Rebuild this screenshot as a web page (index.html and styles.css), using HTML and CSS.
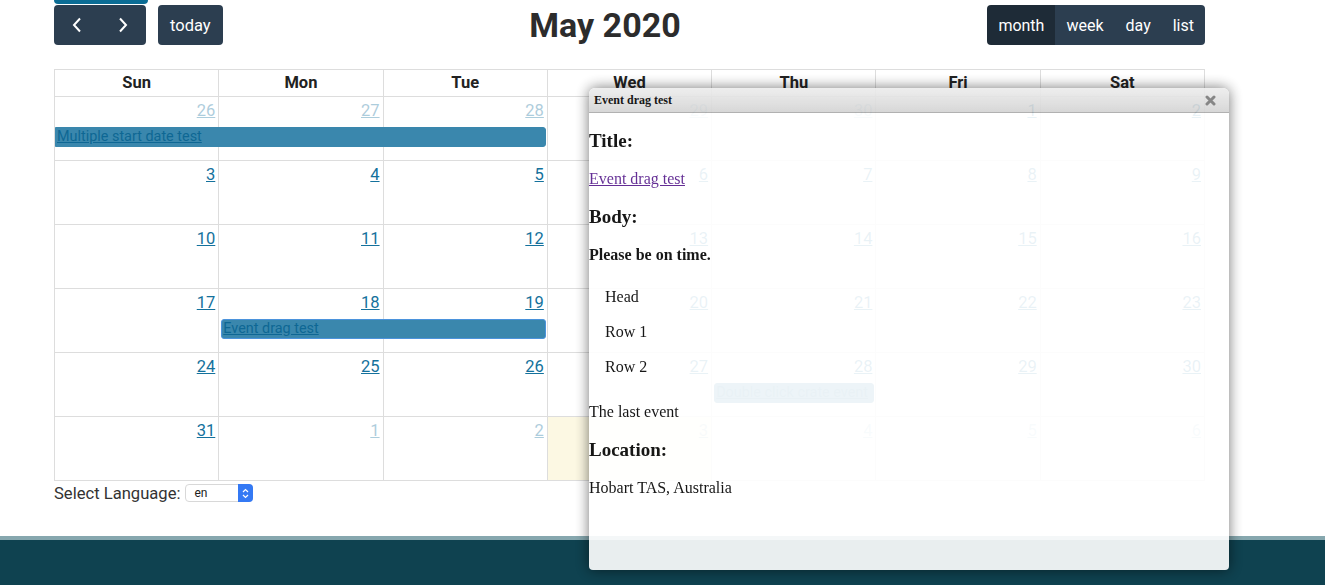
FILE: index.html
```html
<!DOCTYPE html>
<html lang="en">
<head>
    <meta charset="UTF-8">
    <meta name="viewport" content="width=device-width, initial-scale=1.0">
    <title>Calendar</title>
    <link rel="stylesheet" href="styles.css">
</head>
<body>
    <div class="page">
        <div class="nav-tab"></div>

        <div class="toolbar">
            <div class="toolbar-chunk">
                <div class="btn-group">
                    <button class="btn btn-icon" aria-label="prev">
                        <svg width="10" height="16" viewBox="0 0 10 16"><path d="M8 1.5 L2 8 L8 14.5" fill="none" stroke="#fff" stroke-width="2"/></svg>
                    </button>
                    <button class="btn btn-icon" aria-label="next">
                        <svg width="10" height="16" viewBox="0 0 10 16"><path d="M2 1.5 L8 8 L2 14.5" fill="none" stroke="#fff" stroke-width="2"/></svg>
                    </button>
                </div>
                <button class="btn btn-today">today</button>
            </div>
            <h2 class="title">May 2020</h2>
            <div class="btn-group">
                <button class="btn active">month</button>
                <button class="btn">week</button>
                <button class="btn">day</button>
                <button class="btn">list</button>
            </div>
        </div>

        <div class="calendar">
            <div class="head-row">
                <div class="head-cell">Sun</div>
                <div class="head-cell">Mon</div>
                <div class="head-cell">Tue</div>
                <div class="head-cell">Wed</div>
                <div class="head-cell">Thu</div>
                <div class="head-cell">Fri</div>
                <div class="head-cell">Sat</div>
            </div>

            <div class="week">
                <div class="day other"><a class="num" href="#">26</a></div>
                <div class="day other"><a class="num" href="#">27</a></div>
                <div class="day other"><a class="num" href="#">28</a></div>
                <div class="day other"><a class="num" href="#">29</a></div>
                <div class="day other"><a class="num" href="#">30</a></div>
                <div class="day"><a class="num" href="#">1</a></div>
                <div class="day"><a class="num" href="#">2</a></div>
                <a class="event cont-start col-1 span-3" href="#">Multiple start date test</a>
            </div>

            <div class="week">
                <div class="day"><a class="num" href="#">3</a></div>
                <div class="day"><a class="num" href="#">4</a></div>
                <div class="day"><a class="num" href="#">5</a></div>
                <div class="day"><a class="num" href="#">6</a></div>
                <div class="day"><a class="num" href="#">7</a></div>
                <div class="day"><a class="num" href="#">8</a></div>
                <div class="day"><a class="num" href="#">9</a></div>
            </div>

            <div class="week">
                <div class="day"><a class="num" href="#">10</a></div>
                <div class="day"><a class="num" href="#">11</a></div>
                <div class="day"><a class="num" href="#">12</a></div>
                <div class="day"><a class="num" href="#">13</a></div>
                <div class="day"><a class="num" href="#">14</a></div>
                <div class="day"><a class="num" href="#">15</a></div>
                <div class="day"><a class="num" href="#">16</a></div>
            </div>

            <div class="week">
                <div class="day"><a class="num" href="#">17</a></div>
                <div class="day"><a class="num" href="#">18</a></div>
                <div class="day"><a class="num" href="#">19</a></div>
                <div class="day"><a class="num" href="#">20</a></div>
                <div class="day"><a class="num" href="#">21</a></div>
                <div class="day"><a class="num" href="#">22</a></div>
                <div class="day"><a class="num" href="#">23</a></div>
                <a class="event selected col-2 span-2" href="#">Event drag test</a>
            </div>

            <div class="week">
                <div class="day"><a class="num" href="#">24</a></div>
                <div class="day"><a class="num" href="#">25</a></div>
                <div class="day"><a class="num" href="#">26</a></div>
                <div class="day"><a class="num" href="#">27</a></div>
                <div class="day"><a class="num" href="#">28</a></div>
                <div class="day"><a class="num" href="#">29</a></div>
                <div class="day"><a class="num" href="#">30</a></div>
                <a class="event col-5 span-1" href="#">Double click crate event</a>
            </div>

            <div class="week">
                <div class="day"><a class="num" href="#">31</a></div>
                <div class="day other"><a class="num" href="#">1</a></div>
                <div class="day other"><a class="num" href="#">2</a></div>
                <div class="day other today"><a class="num" href="#">3</a></div>
                <div class="day other"><a class="num" href="#">4</a></div>
                <div class="day other"><a class="num" href="#">5</a></div>
                <div class="day other"><a class="num" href="#">6</a></div>
            </div>
        </div>

        <div class="lang">
            <label for="lang" class="lang-label">Select Language:</label>
            <div class="lang-select">
                <select id="lang" name="lang">
                    <option value="en">en</option>
                </select>
                <span class="stepper">
                    <svg width="7" height="11" viewBox="0 0 7 11"><path d="M1 4 L3.5 1.5 L6 4 M1 7 L3.5 9.5 L6 7" fill="none" stroke="#fff" stroke-width="1.2"/></svg>
                </span>
            </div>
        </div>
    </div>

    <div class="footer"></div>

    <div class="dialog">
        <div class="dialog-bar">
            <span>Event drag test</span>
            <svg class="dialog-close" width="11" height="11" viewBox="0 0 11 11"><path d="M2 2 L9 9 M9 2 L2 9" stroke="#7b7b7b" stroke-width="3" stroke-linecap="round"/></svg>
        </div>
        <div class="dialog-body">
            <h3>Title:</h3>
            <p><a href="#" class="visited">Event drag test</a></p>
            <h3>Body:</h3>
            <h4>Please be on time.</h4>
            <table>
                <tr><td>Head</td></tr>
                <tr><td>Row 1</td></tr>
                <tr><td>Row 2</td></tr>
            </table>
            <p>The last event</p>
            <h3>Location:</h3>
            <p>Hobart TAS, Australia</p>
        </div>
    </div>
</body>
</html>
```

FILE: styles.css
```css
body {
    margin: 0;
    background-color: #fff;
    color: #333;
    font-family: Roboto, "Liberation Sans", sans-serif;
    font-size: 16px;
}

.page {
    padding: 0 120px 0 54px;
}

.nav-tab {
    width: 94px;
    height: 4px;
    background-color: #0b6c94;
    border-radius: 0 0 4px 4px;
}

/* toolbar */

.toolbar {
    display: flex;
    justify-content: space-between;
    align-items: center;
    height: 40px;
    margin: 1px 0 24px;
}

.toolbar-chunk {
    display: flex;
    align-items: center;
    gap: 12px;
}

.btn-group {
    display: flex;
}

.btn {
    height: 40px;
    padding: 0 11px;
    border: none;
    border-radius: 4px;
    background-color: #2c3e50;
    color: #fff;
    font-family: inherit;
    font-size: 16px;
    cursor: pointer;
}

.btn-today {
    padding: 0 12px;
    font-size: 16.5px;
}

.btn-group .btn {
    border-radius: 0;
}

.btn-group .btn:first-child {
    border-radius: 4px 0 0 4px;
}

.btn-group .btn:last-child {
    border-radius: 0 4px 4px 0;
}

.btn-icon {
    width: 46px;
    display: flex;
    align-items: center;
    justify-content: center;
}

.btn.active {
    background-color: #1e2b37;
}

.title {
    margin: 0;
    font-size: 34px;
    font-weight: bold;
    color: #2c2c2c;
}

/* month grid */

.calendar {
    border-top: 1px solid #ddd;
    border-left: 1px solid #ddd;
}

.head-row {
    display: grid;
    grid-template-columns: repeat(7, 1fr);
}

.head-cell {
    height: 26px;
    line-height: 26px;
    text-align: center;
    font-weight: bold;
    font-size: 16.5px;
    color: #222;
    border-right: 1px solid #ddd;
    border-bottom: 1px solid #ddd;
}

.week {
    display: grid;
    grid-template-columns: repeat(7, 1fr);
    grid-template-rows: 30px 20px 1fr;
    height: 64px;
}

.day {
    grid-row: 1 / 4;
    padding: 4px 3px 0 0;
    text-align: right;
    border-right: 1px solid #ddd;
    border-bottom: 1px solid #ddd;
}

.day:nth-child(1) { grid-column: 1; }
.day:nth-child(2) { grid-column: 2; }
.day:nth-child(3) { grid-column: 3; }
.day:nth-child(4) { grid-column: 4; }
.day:nth-child(5) { grid-column: 5; }
.day:nth-child(6) { grid-column: 6; }
.day:nth-child(7) { grid-column: 7; }

.num {
    font-size: 16.5px;
    line-height: 20px;
    color: #14719c;
    text-decoration: underline;
}

.day.other .num {
    opacity: 0.35;
}

.day.today {
    background-color: #fcf8e3;
}

.event {
    grid-row: 2;
    margin: 0 2px;
    padding: 0 1px;
    background-color: #3a87ad;
    border: 1px solid #3a87ad;
    border-radius: 3px;
    color: #0e6794;
    font-size: 14.4px;
    line-height: 18px;
    white-space: nowrap;
    overflow: hidden;
}

.event.cont-start {
    margin-left: 0;
    border-top-left-radius: 0;
    border-bottom-left-radius: 0;
}

.event.selected {
    border-color: #4b93dc;
}

.col-1 { grid-column-start: 1; }
.col-2 { grid-column-start: 2; }
.col-5 { grid-column-start: 5; }
.span-1 { grid-column-end: span 1; }
.span-2 { grid-column-end: span 2; }
.span-3 { grid-column-end: span 3; }

/* language picker */

.lang {
    display: flex;
    align-items: center;
    gap: 5px;
    height: 24px;
}

.lang-label {
    color: #333;
    font-size: 16.6px;
}

.lang-select {
    display: flex;
    box-sizing: border-box;
    width: 68px;
    height: 18px;
    border: 1px solid #d8d8d8;
    border-radius: 4px;
    background-color: #fff;
}

.lang-select select {
    flex: 1;
    min-width: 0;
    padding: 0 0 0 8px;
    border: none;
    background: transparent;
    appearance: none;
    outline: none;
    color: #222;
    font-family: Roboto, sans-serif;
    font-size: 12px;
}

.stepper {
    width: 15px;
    margin: -1px -1px -1px 0;
    display: flex;
    align-items: center;
    justify-content: center;
    background-color: #3479f4;
    border-radius: 0 4px 4px 0;
}

.footer {
    height: 46px;
    margin-top: 31px;
    border-top: 4px solid #86a7ae;
    background-color: #0f4250;
}

/* event popup */

.dialog {
    position: absolute;
    left: 589px;
    top: 88px;
    width: 640px;
    height: 482px;
    overflow: hidden;
    background-color: #fff;
    border-radius: 6px 6px 4px 4px;
    box-shadow: 0 0 14px rgba(0, 0, 0, 0.6);
    opacity: 0.91;
    color: #000;
    font-family: "Liberation Serif", serif;
}

.dialog-bar {
    display: flex;
    justify-content: space-between;
    align-items: center;
    height: 24px;
    padding: 0 13px 0 5px;
    border-bottom: 1px solid #aaa;
    background: linear-gradient(#ededed, #d4d4d4);
    font-size: 12px;
    font-weight: bold;
}

.dialog-body h3 {
    margin: 18px 0;
    font-size: 19px;
    line-height: 20px;
}

.dialog-body h4 {
    margin: 18px 0 14px;
    font-size: 16px;
    line-height: 20px;
}

.dialog-body p {
    margin: 18px 0;
    line-height: 20px;
}

.dialog-body table {
    margin: 0;
    border-collapse: collapse;
}

.dialog-body td {
    height: 35px;
    padding: 0 16px;
}

.visited {
    color: #551a8b;
}
```
